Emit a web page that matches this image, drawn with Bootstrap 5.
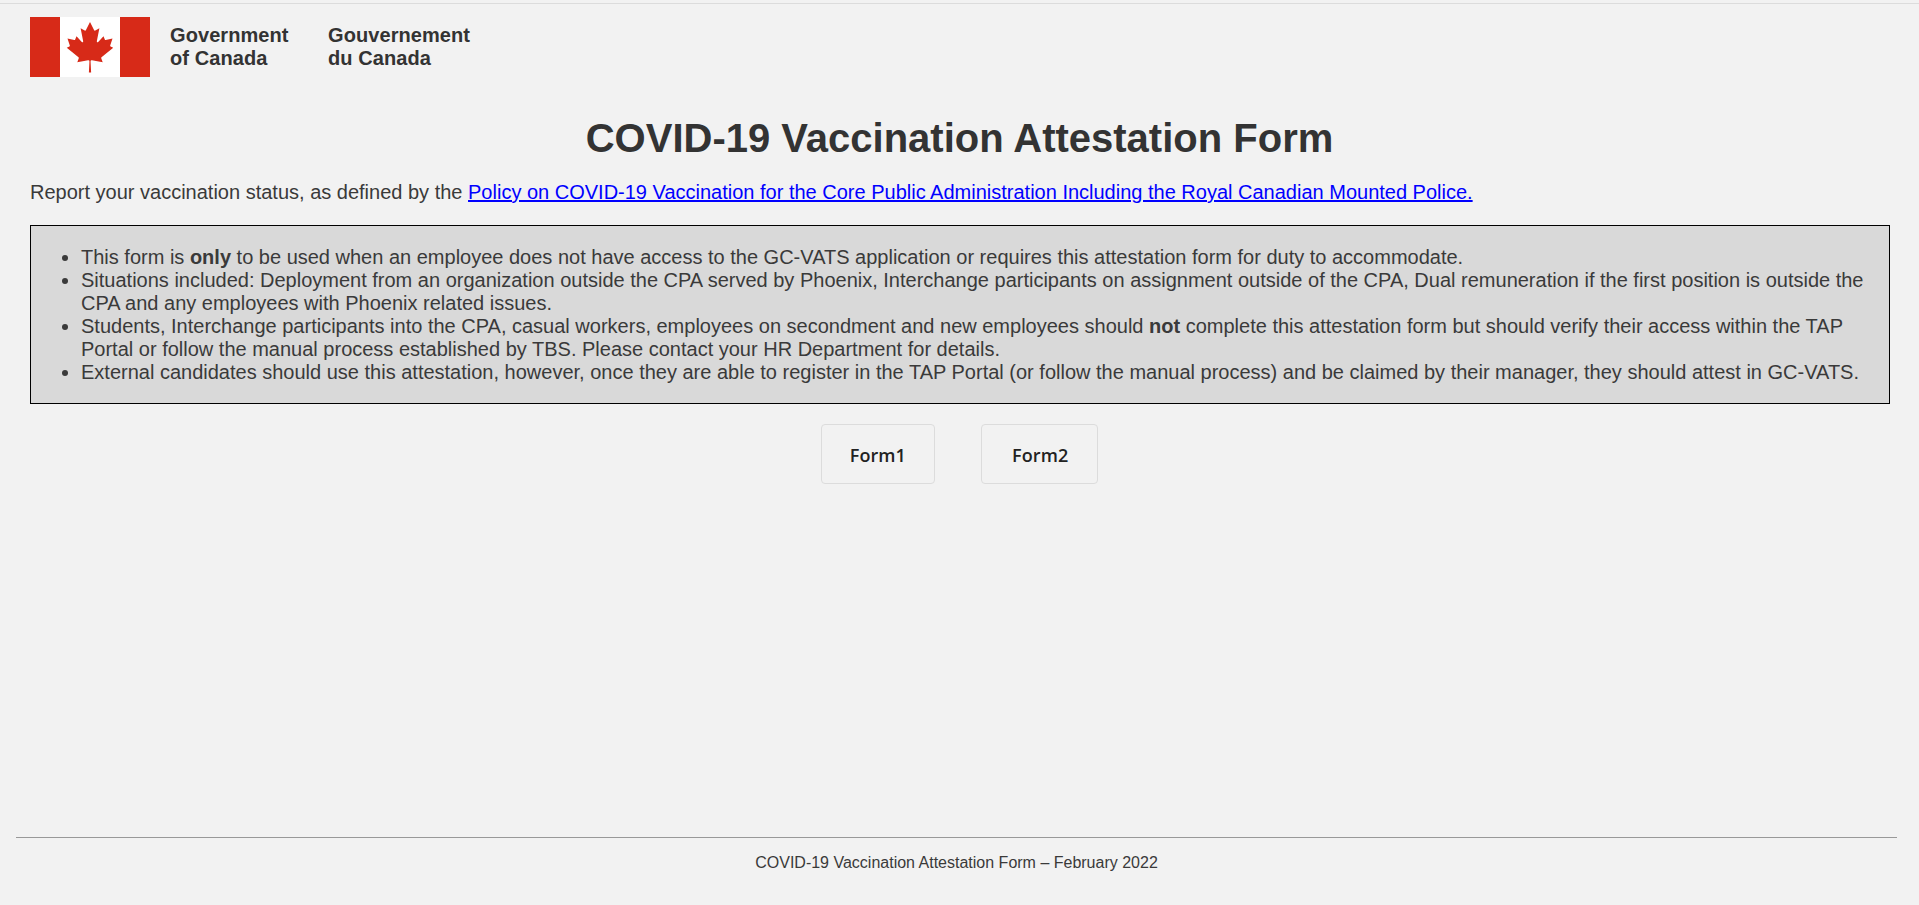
<!DOCTYPE html>
<html lang="en">
<head>
<meta charset="utf-8">
<title>COVID-19 Vaccination Attestation Form</title>
<link href="https://cdn.jsdelivr.net/npm/bootstrap@5.3.0/dist/css/bootstrap.min.css" rel="stylesheet">
<style>
html, body { height: 100%; }
body { background: #f2f2f2; color: #3a3a3a; font-family: "Liberation Sans", Arial, sans-serif; font-size: 20px; line-height: 23px; overflow: hidden; }
.page-shell { height: 905px; }
.top-rule { height: 4px; border-bottom: 1px solid #dcdcdc; }
.brand-bar { padding: 13px 30px 0; }
.brand-flag { width: 120px; height: 60px; display: block; }
.brand-names { margin-left: 20px; gap: 39px; font-weight: 700; font-size: 20px; line-height: 23px; letter-spacing: .08px; color: #333; }
.brand-name { width: 119px; white-space: nowrap; }
.page-title { font-family: "Liberation Sans", Arial, sans-serif; font-size: 40px; font-weight: 700; line-height: 46px; color: #333; margin: 38px 0 20px; text-align: center; }
.intro-line { margin: 0 30px 21px; }
.intro-line a { color: #00f; }
.notice-box { margin: 0 29px 20px 30px; background: #d9d9d9; border: 1px solid #000; padding: 20px 20px 19px 20px; }
.notice-box ul { margin: 0; padding-left: 30px; }
.form-btn { font-family: "Open Sans", "Noto Sans", sans-serif; font-size: 18px; font-weight: 600; letter-spacing: .1px; color: #222; background: #f2f2f2; border: 1px solid #dcdcdc; border-radius: 4px; height: 60px; padding: 3px 28px 0; display: flex; align-items: center; }
.form-btn + .form-btn { padding-left: 30px; padding-right: 29px; }
.form-btn:hover { background: #e8e8e8; color: #222; border-color: #dcdcdc; }
.btn-row { gap: 46px; }
.foot-block { padding: 0 22px 0 16px; }
.foot-rule { margin: 0; border: 0; border-top: 1px solid #999; opacity: 1; }
.foot-text { font-size: 16px; line-height: 20px; padding: 15px 0 32px; color: #3a3a3a; }
</style>
</head>
<body>
<div class="page-shell d-flex flex-column">
  <div class="top-rule"></div>
  <header class="brand-bar d-flex align-items-center">
    <svg class="brand-flag" viewBox="0 0 9600 4800" aria-label="Flag of Canada" role="img">
      <rect width="9600" height="4800" fill="#d72a18"/>
      <path fill="#fff" d="m2400 0h4800v4800h-4800zm2490 4430-45-863a95 95 0 0 1 111-98l859 151-116-320a65 65 0 0 1 20-73l941-762-212-99a65 65 0 0 1-34-79l186-572-542 115a65 65 0 0 1-73-38l-105-247-423 454a65 65 0 0 1-111-57l204-1052-327 189a65 65 0 0 1-91-27l-332-652-332 652a65 65 0 0 1-91 27l-327-189 204 1052a65 65 0 0 1-111 57l-423-454-105 247a65 65 0 0 1-73 38l-542-115 186 572a65 65 0 0 1-34 79l-212 99 941 762a65 65 0 0 1 20 73l-116 320 859-151a95 95 0 0 1 111 98l-45 863z"/>
    </svg>
    <div class="brand-names d-flex">
      <div class="brand-name">Government<br>of Canada</div>
      <div class="brand-name">Gouvernement<br>du Canada</div>
    </div>
  </header>
  <h1 class="page-title">COVID-19 Vaccination Attestation Form</h1>
  <p class="intro-line">Report your vaccination status, as defined by the <a href="#">Policy on COVID-19 Vaccination for the Core Public Administration Including the Royal Canadian Mounted Police.</a></p>
  <div class="notice-box">
    <ul>
      <li>This form is <strong>only</strong> to be used when an employee does not have access to the GC-VATS application or requires this attestation form for duty to accommodate.</li>
      <li>Situations included: Deployment from an organization outside the CPA served by Phoenix, Interchange participants on assignment outside of the CPA, Dual remuneration if the first position is outside the CPA and any employees with Phoenix related issues.</li>
      <li>Students, Interchange participants into the CPA, casual workers, employees on secondment and new employees should <strong>not</strong> complete this attestation form but should verify their access within the TAP Portal or follow the manual process established by TBS. Please contact your HR Department for details.</li>
      <li>External candidates should use this attestation, however, once they are able to register in the TAP Portal (or follow the manual process) and be claimed by their manager, they should attest in GC-VATS.</li>
    </ul>
  </div>
  <div class="btn-row d-flex justify-content-center">
    <a class="btn form-btn" href="#">Form1</a>
    <a class="btn form-btn" href="#">Form2</a>
  </div>
  <footer class="foot-block mt-auto">
    <hr class="foot-rule">
    <div class="foot-text text-center">COVID-19 Vaccination Attestation Form – February 2022</div>
  </footer>
</div>
<script src="https://cdn.jsdelivr.net/npm/bootstrap@5.3.0/dist/js/bootstrap.bundle.min.js"></script>
</body>
</html>
